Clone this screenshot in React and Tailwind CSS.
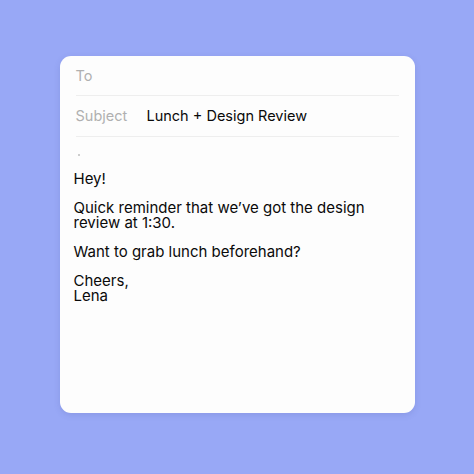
export default function App() {
  return (
    <div className="w-[474px] h-[474px] bg-[#98a8f6] flex items-start justify-center pt-[56px]" style={{ fontFamily: "Inter, 'Liberation Sans', sans-serif" }}>
      <div className="w-[355px] h-[357px] bg-[#fdfdfd] rounded-[11px] shadow-[0_2px_6px_rgba(60,70,140,0.15)] pl-[16px] pr-[16px]">
        {/* To */}
        <div className="h-[40px] flex items-center pt-[1px] border-b border-[#eeeeee]">
          <span className="text-[14.5px] text-[#b0b0b0]">To</span>
        </div>
        {/* Subject */}
        <div className="h-[41px] flex items-center border-b border-[#eeeeee]">
          <span className="text-[14.5px] text-[#b0b0b0] w-[71px]">Subject</span>
          <span className="text-[14.5px] text-[#0a0a0a]">Lunch + Design Review</span>
        </div>
        <div className="pt-[17px] pl-[2px]">
          <div className="w-[2px] h-[2px] rounded-full bg-[#bdbdbd]" />
        </div>
        {/* Body */}
        <div className="pt-[15px] -ml-[2px] text-[15px] leading-[15px] text-[#0a0a0a]">
          <p>Hey!</p>
          <p className="mt-[14px]">Quick reminder that we’ve got the design<br />review at 1:30.</p>
          <p className="mt-[14px]">Want to grab lunch beforehand?</p>
          <p className="mt-[14px]">Cheers,<br />Lena</p>
        </div>
      </div>
    </div>
  )
}
